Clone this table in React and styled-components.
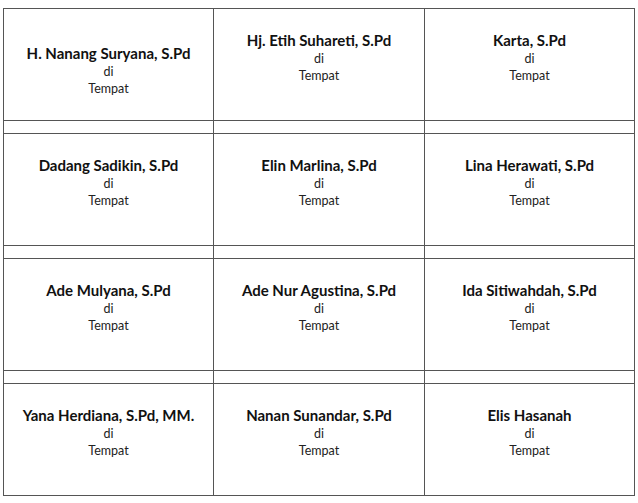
import React from "react";
import styled, { createGlobalStyle } from "styled-components";

const Global = createGlobalStyle`
  html, body { margin: 0; padding: 0; background: #ffffff; }
  body { font-family: Lato, "Open Sans", sans-serif; color: #111; }
`;

const Page = styled.div`
  padding: 8px 0 0 3px;
`;

const Grid = styled.div`
  display: grid;
  grid-template-columns: 210px 211px 210px;
  border-top: 1px solid #555;
  border-left: 1px solid #555;
  width: 631px;
`;

const Cell = styled.div`
  box-sizing: border-box;
  height: ${(p) => (p.$spacer ? 13 : 112)}px;
  border-right: 1px solid #555;
  border-bottom: 1px solid #555;
  display: flex;
  flex-direction: column;
  align-items: center;
  padding-top: ${(p) => (p.$spacer ? 0 : 22 + (p.$offset || 0))}px;
`;

const Name = styled.div`
  font-weight: 700;
  font-size: 15px;
  line-height: 19px;
  color: #111;
`;

const Line = styled.div`
  font-size: 12.5px;
  line-height: 17px;
  color: #222;
`;

const rows = [
  ["H. Nanang Suryana, S.Pd", "Hj. Etih Suhareti, S.Pd", "Karta, S.Pd"],
  ["Dadang Sadikin, S.Pd", "Elin Marlina, S.Pd", "Lina Herawati, S.Pd"],
  ["Ade Mulyana, S.Pd", "Ade Nur Agustina, S.Pd", "Ida Sitiwahdah, S.Pd"],
  ["Yana Herdiana, S.Pd, MM.", "Nanan Sunandar, S.Pd", "Elis Hasanah"],
];

export default function App() {
  return (
    <>
      <Global />
      <Page>
        <Grid>
          {rows.map((row, ri) => (
            <React.Fragment key={ri}>
              {row.map((name, ci) => (
                <Cell key={name} $offset={ri === 0 && ci === 0 ? 13 : 0}>
                  <Name>{name}</Name>
                  <Line>di</Line>
                  <Line>Tempat</Line>
                </Cell>
              ))}
              {ri < rows.length - 1 &&
                [0, 1, 2].map((k) => <Cell key={`s${ri}-${k}`} $spacer />)}
            </React.Fragment>
          ))}
        </Grid>
      </Page>
    </>
  );
}
